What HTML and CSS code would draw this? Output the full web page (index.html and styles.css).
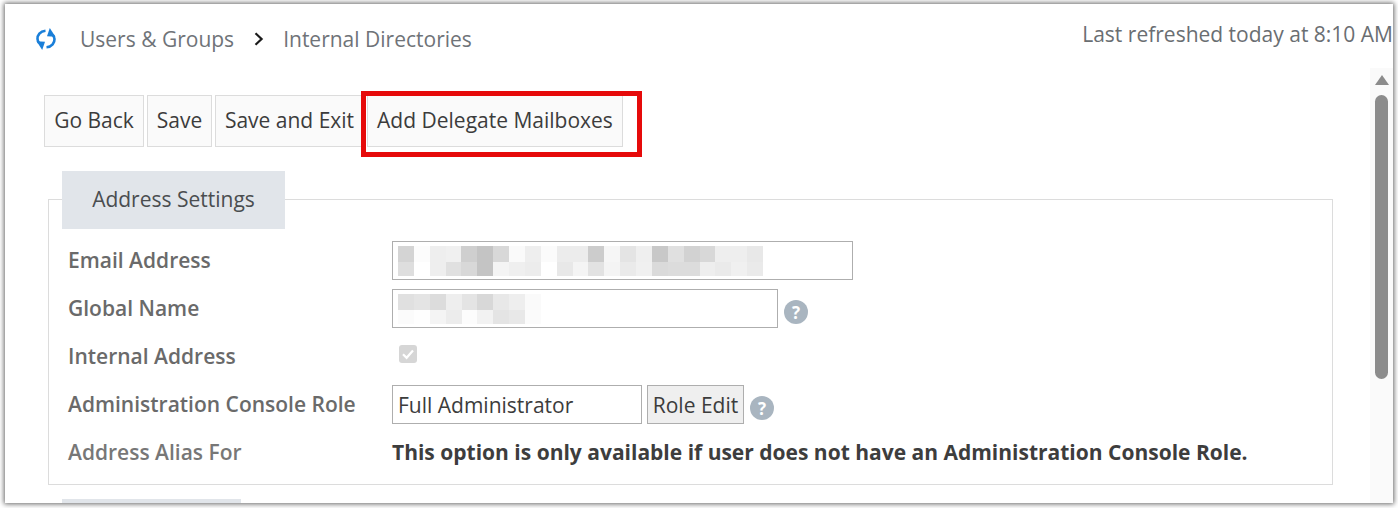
FILE: index.html
```html
<!DOCTYPE html>
<html lang="en">
<head>
<meta charset="utf-8">
<title>Internal Directories</title>
<link rel="stylesheet" href="styles.css">
</head>
<body>
<div class="frame">
  <header class="top">
    <nav class="crumbs">
      <svg class="sync" viewBox="0 0 20 22" width="20" height="22" aria-hidden="true">
        <path d="M9.500 2.800C4 3.200 1.300 7.400 1.500 11c.1 1.600.7 3 1.700 4.200" fill="none" stroke="#1a7fd9" stroke-width="2.600"/>
        <path d="M.6 13.200l8.400.6-2.800 8.200z" fill="#1a7fd9"/>
        <path d="M10.500 19.200c5.500-.4 8.200-4.600 8-8.200-.1-1.600-.7-3-1.700-4.200" fill="none" stroke="#1a7fd9" stroke-width="2.600"/>
        <path d="M19.400 8.800l-8.400-.6 2.800-8.200z" fill="#1a7fd9"/>
      </svg>
      <span class="crumb">Users &amp; Groups</span>
      <svg class="chev" viewBox="0 0 10 14" width="10" height="14" aria-hidden="true">
        <path d="M1.500 1.200L7.600 7l-6.100 5.800" fill="none" stroke="#1b1b1b" stroke-width="2.200"/>
      </svg>
      <span class="crumb">Internal Directories</span>
    </nav>
    <div class="refreshed">Last refreshed today at 8:10 AM</div>
  </header>
  <div class="body">
    <main class="content">
      <div class="actions">
        <button class="btn btn-back" type="button">Go Back</button>
        <button class="btn btn-save" type="button">Save</button>
        <button class="btn btn-exit" type="button">Save and Exit</button>
        <button class="btn btn-add" type="button">Add Delegate Mailboxes<span class="highlight"></span></button>
      </div>
      <section class="panel">
        <h2 class="tab">Address Settings</h2>
        <div class="form">
          <div class="row">
            <div class="label">Email Address</div>
            <div class="field field-email">
              <svg class="mosaic" width="365" height="30" viewBox="0 0 368 30" preserveAspectRatio="none" shape-rendering="crispEdges" aria-hidden="true">
                <g>
                  <rect x="0" width="16" height="16" fill="#d4d4d4"/><rect x="16" width="16" height="16" fill="#fcfcfc"/><rect x="32" width="16" height="16" fill="#eeeeee"/><rect x="48" width="16" height="16" fill="#f0f0f0"/><rect x="64" width="16" height="16" fill="#cfcfcf"/><rect x="80" width="16" height="16" fill="#c4c4c4"/><rect x="96" width="16" height="16" fill="#d8d8d8"/><rect x="112" width="16" height="16" fill="#fafafa"/><rect x="128" width="16" height="16" fill="#eeeeee"/><rect x="144" width="16" height="16" fill="#fbfbfb"/><rect x="160" width="16" height="16" fill="#ececec"/><rect x="176" width="16" height="16" fill="#ececec"/><rect x="192" width="16" height="16" fill="#cccccc"/><rect x="208" width="16" height="16" fill="#f6f6f6"/><rect x="224" width="16" height="16" fill="#e4e4e4"/><rect x="240" width="16" height="16" fill="#efefef"/><rect x="256" width="16" height="16" fill="#c8c8c8"/><rect x="272" width="16" height="16" fill="#e0e0e0"/><rect x="288" width="16" height="16" fill="#d2d2d2"/><rect x="304" width="16" height="16" fill="#d8d8d8"/><rect x="320" width="16" height="16" fill="#eeeeee"/><rect x="336" width="16" height="16" fill="#eeeeee"/><rect x="352" width="16" height="16" fill="#e8e8e8"/>
                </g>
                <g transform="translate(0 16)">
                  <rect x="0" width="16" height="14" fill="#dedede"/><rect x="16" width="16" height="14" fill="#ffffff"/><rect x="32" width="16" height="14" fill="#eeeeee"/><rect x="48" width="16" height="14" fill="#e0e0e0"/><rect x="64" width="16" height="14" fill="#d8d8d8"/><rect x="80" width="16" height="14" fill="#c4c4c4"/><rect x="96" width="16" height="14" fill="#f4f4f4"/><rect x="112" width="16" height="14" fill="#efefef"/><rect x="128" width="16" height="14" fill="#ececec"/><rect x="144" width="16" height="14" fill="#ffffff"/><rect x="160" width="16" height="14" fill="#e8e8e8"/><rect x="176" width="16" height="14" fill="#f4f4f4"/><rect x="192" width="16" height="14" fill="#e2e2e2"/><rect x="208" width="16" height="14" fill="#f4f4f4"/><rect x="224" width="16" height="14" fill="#eaeaea"/><rect x="240" width="16" height="14" fill="#f0f0f0"/><rect x="256" width="16" height="14" fill="#dadada"/><rect x="272" width="16" height="14" fill="#dcdcdc"/><rect x="288" width="16" height="14" fill="#dcdcdc"/><rect x="304" width="16" height="14" fill="#eeeeee"/><rect x="320" width="16" height="14" fill="#eaeaea"/><rect x="336" width="16" height="14" fill="#f0f0f0"/><rect x="352" width="16" height="14" fill="#eaeaea"/>
                </g>
              </svg>
            </div>
          </div>
          <div class="row">
            <div class="label">Global Name</div>
            <div class="field field-name">
              <svg class="mosaic" width="143" height="30" viewBox="0 0 144 30" preserveAspectRatio="none" shape-rendering="crispEdges" aria-hidden="true">
                <g>
                  <rect x="0" width="16" height="16" fill="#e0e0e0"/><rect x="16" width="16" height="16" fill="#e4e4e4"/><rect x="32" width="16" height="16" fill="#dcdcdc"/><rect x="48" width="16" height="16" fill="#eeeeee"/><rect x="64" width="16" height="16" fill="#e4e4e4"/><rect x="80" width="16" height="16" fill="#d8d8d8"/><rect x="96" width="16" height="16" fill="#e8e8e8"/><rect x="112" width="16" height="16" fill="#eeeeee"/><rect x="128" width="16" height="16" fill="#fafafa"/>
                </g>
                <g transform="translate(0 16)">
                  <rect x="0" width="16" height="14" fill="#fbfbfb"/><rect x="16" width="16" height="14" fill="#fefefe"/><rect x="32" width="16" height="14" fill="#f4f4f4"/><rect x="48" width="16" height="14" fill="#ececec"/><rect x="64" width="16" height="14" fill="#fcfcfc"/><rect x="80" width="16" height="14" fill="#f2f2f2"/><rect x="96" width="16" height="14" fill="#e4e4e4"/><rect x="112" width="16" height="14" fill="#e8e8e8"/><rect x="128" width="16" height="14" fill="#fbfbfb"/>
                </g>
              </svg>
            </div>
            <span class="help">?</span>
          </div>
          <div class="row">
            <div class="label">Internal Address</div>
            <span class="check">
              <svg viewBox="0 0 18 18" width="18" height="18" aria-hidden="true">
                <path d="M4 9.200l3.600 3.600L14 5.600" fill="none" stroke="#ffffff" stroke-width="2.200"/>
              </svg>
            </span>
          </div>
          <div class="row">
            <div class="label">Administration Console Role</div>
            <div class="field field-role">Full Administrator</div>
            <button class="role-edit" type="button">Role Edit</button>
            <span class="help help-role">?</span>
          </div>
          <div class="row">
            <div class="label label-muted">Address Alias For</div>
            <div class="note">This option is only available if user does not have an Administration Console Role.</div>
          </div>
        </div>
      </section>
      <div class="tab tab-next"></div>
    </main>
    <aside class="scrollbar">
      <span class="arrow"></span>
      <span class="thumb"></span>
    </aside>
  </div>
</div>
</body>
</html>
```
FILE: styles.css
```css
* { box-sizing: border-box; }
html, body { margin: 0; padding: 0; background: #fff; }
body {
  font-family: "Open Sans", "Liberation Sans", sans-serif;
  width: 1398px;
  height: 508px;
  overflow: hidden;
  padding: 4px 5px 5px 5px;
}
.frame {
  width: 1388px;
  height: 499px;
  background: #fff;
  box-shadow: 0 0 5px 1px rgba(0,0,0,.6);
  overflow: hidden;
  display: flex;
  flex-direction: column;
}
.top {
  height: 64px;
  display: flex;
  justify-content: space-between;
  flex: none;
}
.crumbs {
  display: flex;
  align-items: center;
  height: 70px;
  padding-left: 31px;
  font-size: 21px;
  color: #6f7378;
}
.sync { flex: none; }
.crumb { margin-left: 24px; }
.chev { margin-left: 20px; margin-right: -5px; flex: none; }
.refreshed {
  font-size: 21px;
  color: #6a6e72;
  padding-top: 16px;
  white-space: nowrap;
}
.body { flex: 1; display: flex; min-height: 0; }
.content { flex: 1; min-width: 0; overflow: hidden; }
.actions {
  display: flex;
  gap: 3px;
  padding: 27px 0 0 39px;
}
.btn {
  height: 52px;
  padding: 0 0 3px;
  background: #fafafa;
  border: 1px solid #dcdcdc;
  font: 21px "Open Sans", sans-serif;
  color: #3c3c3c;
  position: relative;
}
.btn-back { width: 100px; }
.btn-save { width: 65px; }
.btn-exit { width: 149px; }
.btn-add { width: 256px; }
.highlight {
  position: absolute;
  left: -7px;
  top: -5px;
  right: -20px;
  bottom: -11px;
  border: 5px solid #e60a0a;
}
.panel {
  margin: 52px 0 0 43px;
  width: 1285px;
  border: 1px solid #dcdcdc;
  height: 286px;
  position: relative;
}
.tab {
  margin: -29px 0 0 13px;
  width: 223px;
  height: 58px;
  background: #e1e5ea;
  font-weight: 400;
  font-size: 21px;
  color: #4a4d50;
  display: flex;
  align-items: center;
  justify-content: center;
  padding-bottom: 2px;
}
.tab-next { margin: 14px 0 0 57px; width: 179px; height: 20px; }
.form { padding: 7px 0 0 19px; }
.row { display: flex; align-items: center; height: 48px; }
.label {
  width: 324px;
  flex: none;
  font-size: 21px;
  font-weight: 600;
  color: #6a6a6a;
}
.label-muted { color: #777; }
.field {
  border: 1px solid #aeaeae;
  height: 39px;
  padding: 4px 5px;
  font-size: 21px;
  color: #3c3c3c;
  line-height: 30px;
  background: #fff;
}
.mosaic { display: block; }
.field-email { width: 461px; }
.field-name { width: 386px; }
.field-role { width: 250px; padding: 4px 5px 3px 5px; }
.help {
  margin: 8px 0 0 6px;
  width: 24px;
  height: 24px;
  border-radius: 50%;
  background: #a9b5c0;
  color: #fff;
  font-size: 17px;
  font-weight: 700;
  display: flex;
  align-items: center;
  justify-content: center;
  flex: none;
}
.check {
  width: 18px;
  height: 18px;
  border-radius: 3px;
  background: #d6d6d6;
  margin-left: 7px;
  margin-bottom: 5px;
  display: block;
}
.check svg { display: block; }
.role-edit {
  margin-left: 5px;
  width: 97px;
  height: 39px;
  padding: 2px 0 0;
  background: #efefef;
  border: 1px solid #aeaeae;
  font: 21px "Open Sans", sans-serif;
  color: #3c3c3c;
}
.note { font-size: 21px; font-weight: 700; color: #3d3d3d; white-space: nowrap; }
.scrollbar {
  width: 23px;
  flex: none;
  background: #fafafa;
  display: flex;
  flex-direction: column;
  align-items: center;
  padding-top: 7px;
}
.arrow {
  width: 0;
  height: 0;
  border-left: 7.5px solid transparent;
  border-right: 7.5px solid transparent;
  border-bottom: 10px solid #8c8c8c;
}
.thumb {
  margin-top: 10px;
  width: 13px;
  height: 284px;
  border-radius: 7px;
  background: #8c8c8c;
}
```
